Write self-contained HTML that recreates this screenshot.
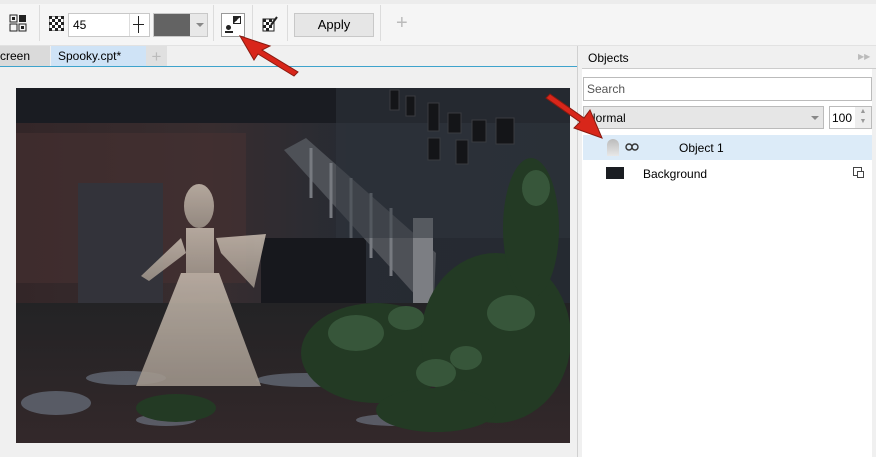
<!DOCTYPE html>
<html><head><meta charset="utf-8"><style>
*{margin:0;padding:0;box-sizing:border-box}
body{width:876px;height:457px;overflow:hidden;background:#f0f0f0;font-family:"Liberation Sans",sans-serif;font-size:12px;color:#000;position:relative}
.a{position:absolute}
</style></head><body>
<div class="a" style="left:0;top:0;width:876px;height:46px;background:#f5f5f5;border-bottom:1px solid #e2e2e2"></div>
<div class="a" style="left:0;top:0;width:876px;height:4px;background:#ececec"></div>
<svg class="a" style="left:9px;top:14px" width="18" height="18" viewBox="0 0 18 18"><rect x="1" y="1" width="7" height="7" fill="none" stroke="#222"/><rect x="10" y="1" width="7" height="7" fill="#222"/><rect x="1" y="10" width="7" height="7" fill="none" stroke="#222"/><rect x="10" y="10" width="7" height="7" fill="none" stroke="#222"/><rect x="3" y="3" width="3" height="3" fill="#222"/><rect x="12" y="12" width="3" height="3" fill="#222"/></svg>
<div class="a" style="left:39px;top:5px;width:1px;height:36px;background:#dcdcdc"></div>
<svg class="a" style="left:49px;top:16px" width="15" height="15" viewBox="0 0 5 5"><rect width="5" height="5" fill="#fff" stroke="#222" stroke-width=".3"/><g fill="#222"><rect x="0" y="0" width="1" height="1"/><rect x="2" y="0" width="1" height="1"/><rect x="4" y="0" width="1" height="1"/><rect x="1" y="1" width="1" height="1"/><rect x="3" y="1" width="1" height="1"/><rect x="0" y="2" width="1" height="1"/><rect x="2" y="2" width="1" height="1"/><rect x="4" y="2" width="1" height="1"/><rect x="1" y="3" width="1" height="1"/><rect x="3" y="3" width="1" height="1"/><rect x="0" y="4" width="1" height="1"/><rect x="2" y="4" width="1" height="1"/><rect x="4" y="4" width="1" height="1"/></g></svg>
<div class="a" style="left:68px;top:13px;width:82px;height:24px;background:#fff;border:1px solid #c8c8c8"></div>
<div class="a" style="left:73px;top:18px;font-size:12px">45</div>
<div class="a" style="left:129px;top:14px;width:1px;height:22px;background:#ddd"></div>
<div class="a" style="left:138px;top:16px;width:1px;height:17px;background:#222"></div>
<div class="a" style="left:133px;top:24px;width:11px;height:1px;background:#222"></div>
<div class="a" style="left:153px;top:13px;width:55px;height:24px;background:#e8e8e8;border:1px solid #c8c8c8"></div>
<div class="a" style="left:154px;top:14px;width:36px;height:22px;background:#636363"></div>
<div class="a" style="left:196px;top:23px;border-left:4px solid transparent;border-right:4px solid transparent;border-top:4px solid #888"></div>
<div class="a" style="left:213px;top:5px;width:1px;height:36px;background:#dcdcdc"></div>
<div class="a" style="left:221px;top:13px;width:24px;height:24px;background:#fff;border:1px solid #999"></div>
<div class="a" style="left:233px;top:16px;width:8px;height:8px;border:1px solid #222;background:linear-gradient(135deg,#222 50%,#fff 50%)"></div>
<div class="a" style="left:226px;top:25px;width:5px;height:5px;border-radius:50%;background:#222"></div>
<div class="a" style="left:225px;top:31px;width:8px;height:2px;background:#222"></div>
<div class="a" style="left:252px;top:5px;width:1px;height:36px;background:#dcdcdc"></div>
<svg class="a" style="left:262px;top:16px" width="16" height="16" viewBox="0 0 16 16"><rect x="1" y="3" width="11" height="12" fill="#fff" stroke="#222"/><g fill="#222"><rect x="1" y="3" width="3" height="3"/><rect x="7" y="3" width="3" height="3"/><rect x="4" y="6" width="3" height="3"/><rect x="1" y="9" width="3" height="3"/><rect x="7" y="9" width="3" height="3"/><rect x="4" y="12" width="3" height="3"/></g><path d="M9 9 L15 1" stroke="#222" stroke-width="2"/></svg>
<div class="a" style="left:287px;top:5px;width:1px;height:36px;background:#dcdcdc"></div>
<div class="a" style="left:294px;top:13px;width:80px;height:24px;background:#e6e6e6;border:1px solid #c8c8c8;text-align:center;line-height:22px;font-size:13px">Apply</div>
<div class="a" style="left:380px;top:5px;width:1px;height:36px;background:#dcdcdc"></div>
<div class="a" style="left:396px;top:13px;font-size:20px;color:#bbb;line-height:20px">+</div>
<div class="a" style="left:0;top:46px;width:578px;height:22px;background:#f0f0f0"></div>
<div class="a" style="left:0;top:46px;width:50px;height:21px;background:#dadada"></div>
<div class="a" style="left:0;top:49px;font-size:12px">creen</div>
<div class="a" style="left:51px;top:46px;width:95px;height:21px;background:#cfe3f6"></div>
<div class="a" style="left:58px;top:49px;font-size:12px">Spooky.cpt*</div>
<div class="a" style="left:146px;top:46px;width:21px;height:21px;background:#e0e0e0;color:#bbb;font-size:17px;text-align:center;line-height:21px">+</div>
<div class="a" style="left:0;top:66px;width:578px;height:1px;background:#3ea3cc"></div>
<svg class="a" style="left:16px;top:88px" width="554" height="355" viewBox="0 0 554 355">
<defs>
<linearGradient id="bg" x1="0" y1="0" x2="1" y2="0"><stop offset="0" stop-color="#332628"/><stop offset=".35" stop-color="#382d2f"/><stop offset=".6" stop-color="#272b33"/><stop offset="1" stop-color="#252a31"/></linearGradient>
<linearGradient id="fl" x1="0" y1="0" x2="0" y2="1"><stop offset="0" stop-color="#232325"/><stop offset="1" stop-color="#33282a"/></linearGradient>
<linearGradient id="gh" x1="0" y1="0" x2="0" y2="1"><stop offset="0" stop-color="#c4b8ac"/><stop offset="1" stop-color="#9f958b"/></linearGradient>
</defs>
<rect width="554" height="355" fill="url(#bg)"/>
<rect width="554" height="35" fill="#1a1c22"/>
<rect x="0" y="45" width="230" height="150" fill="#4a3232" opacity=".5"/>
<rect x="62" y="95" width="85" height="140" fill="#33333a"/>
<rect x="245" y="150" width="105" height="80" fill="#17181d"/>
<polygon points="268,62 290,50 420,165 418,210 402,210" fill="#4e5157"/>
<g stroke="#777a80" stroke-width="3"><line x1="295" y1="60" x2="295" y2="110"/><line x1="315" y1="75" x2="315" y2="130"/><line x1="335" y1="90" x2="335" y2="150"/><line x1="355" y1="105" x2="355" y2="170"/><line x1="375" y1="120" x2="375" y2="188"/></g>
<rect x="397" y="130" width="20" height="95" fill="#7c7e83"/>
<rect x="320" y="0" width="234" height="150" fill="#30353d" opacity=".5"/>
<g fill="#141518" stroke="#3a3c40"><rect x="374" y="2" width="9" height="20"/><rect x="390" y="8" width="9" height="20"/><rect x="412" y="15" width="11" height="28"/><rect x="432" y="25" width="13" height="20"/><rect x="456" y="32" width="14" height="22"/><rect x="480" y="30" width="18" height="26"/><rect x="412" y="50" width="12" height="22"/><rect x="440" y="52" width="12" height="24"/></g>
<rect x="0" y="215" width="554" height="140" fill="url(#fl)"/>
<g fill="#7b8797" opacity=".55"><ellipse cx="40" cy="315" rx="35" ry="12"/><ellipse cx="110" cy="290" rx="40" ry="7"/><ellipse cx="290" cy="292" rx="50" ry="7"/><ellipse cx="150" cy="332" rx="30" ry="6"/><ellipse cx="380" cy="332" rx="40" ry="6"/></g>
<g fill="#233a24"><ellipse cx="360" cy="265" rx="75" ry="50"/><ellipse cx="480" cy="250" rx="75" ry="85"/><ellipse cx="515" cy="140" rx="28" ry="70"/><ellipse cx="420" cy="322" rx="60" ry="22"/><ellipse cx="160" cy="320" rx="40" ry="14"/></g>
<g fill="#37563a"><ellipse cx="340" cy="245" rx="28" ry="18"/><ellipse cx="495" cy="225" rx="24" ry="18"/><ellipse cx="520" cy="100" rx="14" ry="18"/><ellipse cx="420" cy="285" rx="20" ry="14"/><ellipse cx="390" cy="230" rx="18" ry="12"/><ellipse cx="450" cy="270" rx="16" ry="12"/></g>
<g fill="url(#gh)" opacity=".88"><ellipse cx="183" cy="118" rx="15" ry="22"/><rect x="170" y="140" width="28" height="55"/><polygon points="165,185 203,185 245,298 120,298"/><polygon points="165,150 125,188 133,193 170,165"/><polygon points="200,150 250,146 238,200 205,165"/></g>
</svg>
<div class="a" style="left:577px;top:46px;width:1px;height:411px;background:#d0d0d0"></div>
<div class="a" style="left:578px;top:46px;width:298px;height:411px;background:#f0f0f0"></div>
<div class="a" style="left:588px;top:51px;font-size:12px">Objects</div>
<div class="a" style="left:858px;top:52px;font-size:8px;color:#bbb">▶▶</div>
<div class="a" style="left:582px;top:68px;width:294px;height:1px;background:#ccc"></div>
<div class="a" style="left:582px;top:69px;width:290px;height:388px;background:#fff"></div>
<div class="a" style="left:583px;top:77px;width:289px;height:24px;background:#fff;border:1px solid #bbb"></div>
<div class="a" style="left:587px;top:82px;color:#555">Search</div>
<div class="a" style="left:583px;top:106px;width:241px;height:23px;background:#e6e6e6;border:1px solid #bbb"></div>
<div class="a" style="left:587px;top:111px">Normal</div>
<div class="a" style="left:811px;top:116px;border-left:4px solid transparent;border-right:4px solid transparent;border-top:4px solid #888"></div>
<div class="a" style="left:829px;top:106px;width:43px;height:23px;background:#fff;border:1px solid #bbb"></div>
<div class="a" style="left:832px;top:111px">100</div>
<div class="a" style="left:855px;top:107px;width:16px;height:21px;background:#eee;color:#999;font-size:7px;text-align:center;line-height:10px">▲<br>▼</div>
<div class="a" style="left:583px;top:135px;width:289px;height:25px;background:#dcebf8"></div>
<div class="a" style="left:607px;top:139px;width:12px;height:17px;background:linear-gradient(#bbb,#e8e8e8);border-radius:6px 6px 0 0"></div>
<svg class="a" style="left:625px;top:142px" width="14" height="10" viewBox="0 0 14 10"><rect x="1" y="2" width="6" height="6" rx="3" fill="none" stroke="#333" stroke-width="1.4"/><rect x="7" y="2" width="6" height="6" rx="3" fill="none" stroke="#333" stroke-width="1.4"/></svg>
<div class="a" style="left:679px;top:141px">Object 1</div>
<div class="a" style="left:606px;top:167px;width:18px;height:12px;background:#1a1d22"></div>
<div class="a" style="left:643px;top:167px">Background</div>
<div class="a" style="left:853px;top:167px;width:9px;height:9px;border:1px solid #444"></div>
<div class="a" style="left:857px;top:171px;width:7px;height:7px;border:1px solid #444;background:#fff"></div>
<svg class="a" style="left:0;top:0" width="876" height="457"><polygon points="240,36 270,46 262,50 298,72 294,76 258,54 254,60" fill="#d8261a" stroke="#8a1a10" stroke-width="1"/><polygon points="602,138 590,110 584,118 550,94 546,98 580,122 574,128" fill="#d8261a" stroke="#8a1a10" stroke-width="1"/></svg>
</body></html>
